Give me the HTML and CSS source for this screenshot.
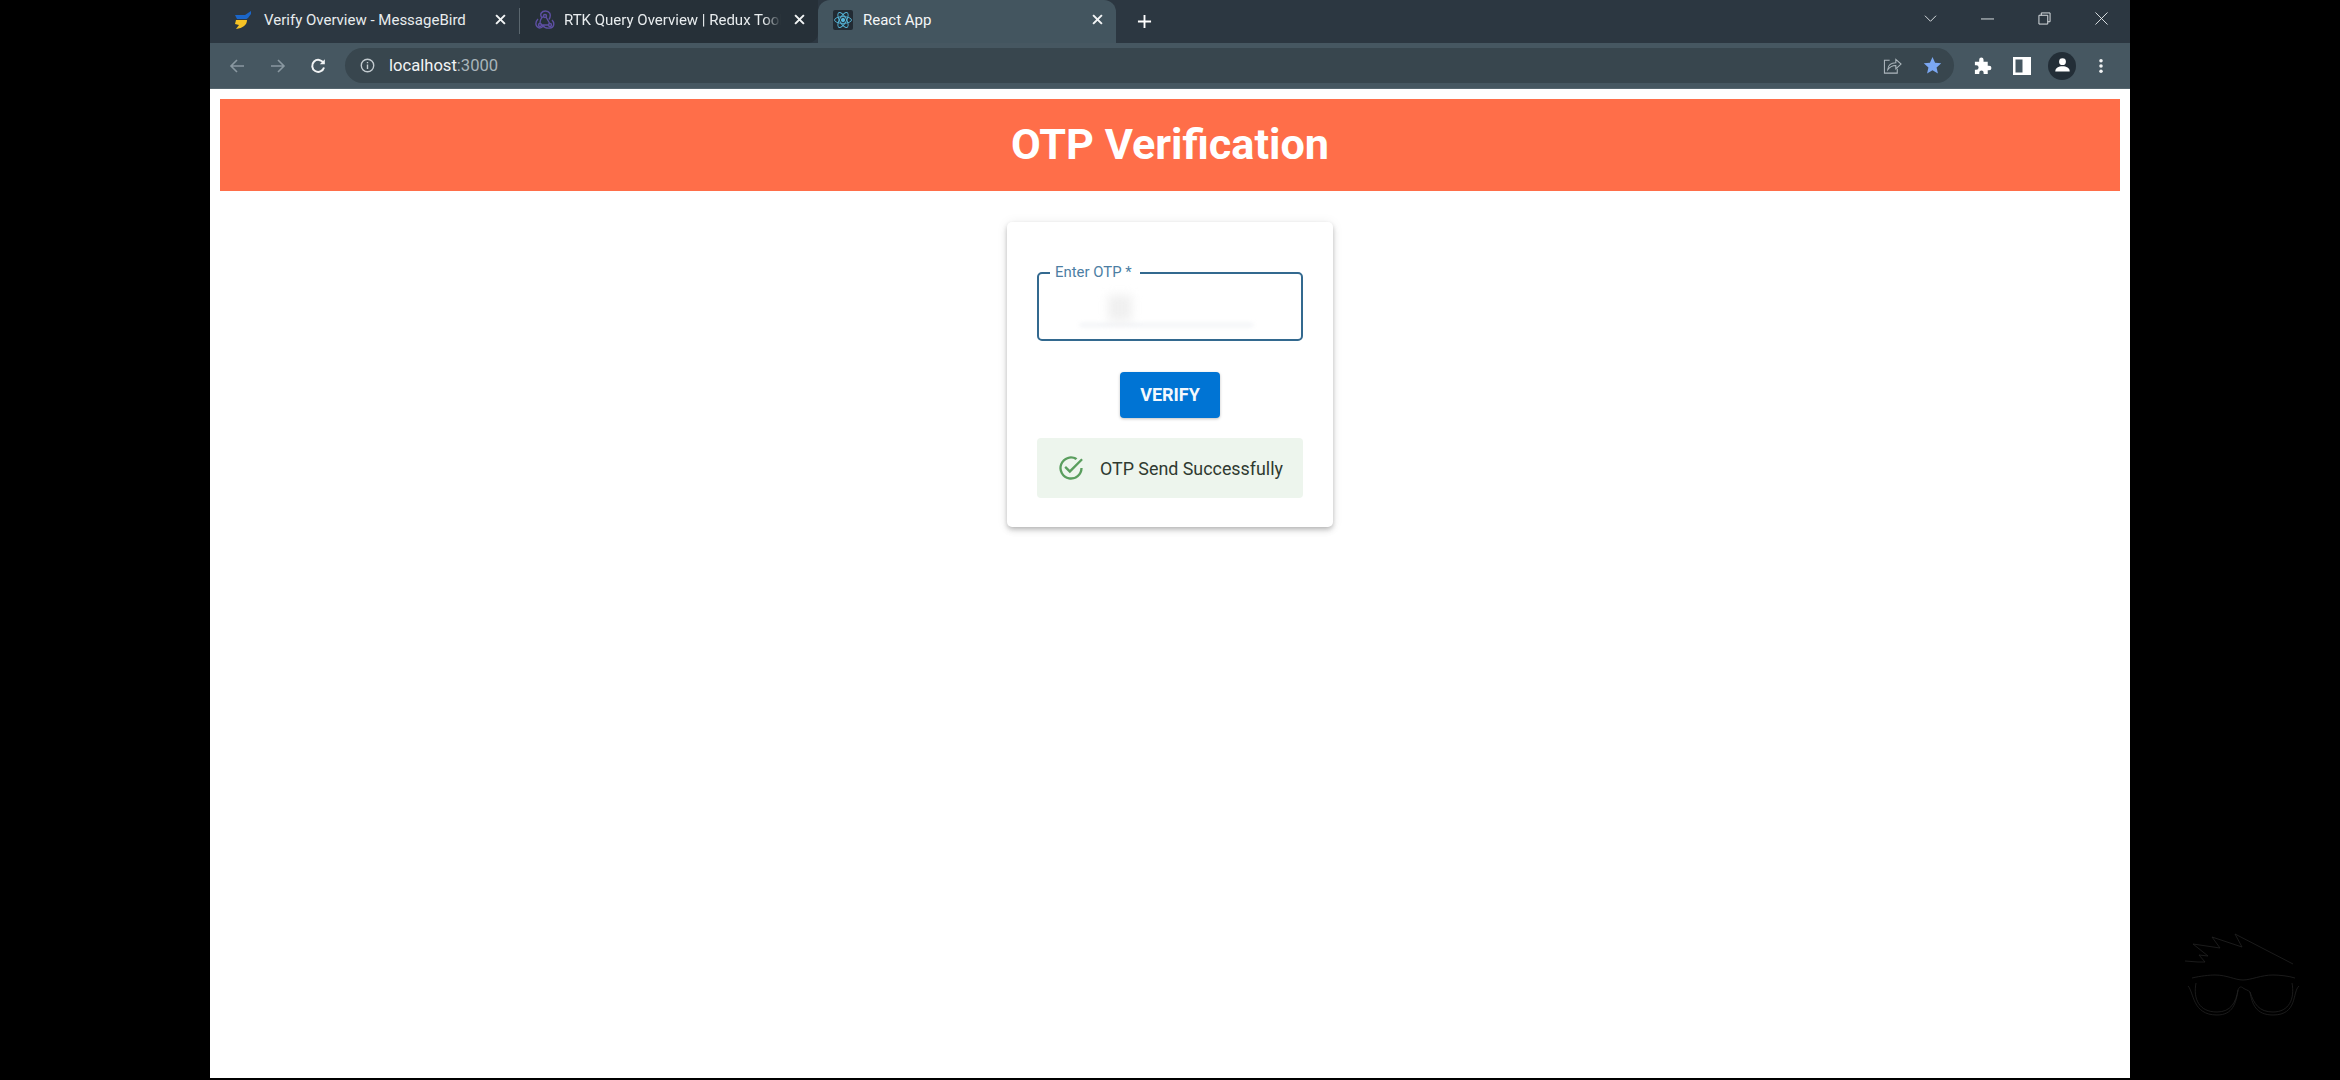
FILE: index.html
```html
<!DOCTYPE html>
<html lang="en">
<head>
<meta charset="utf-8">
<title>React App</title>
<link rel="stylesheet" href="styles.css">
</head>
<body>
<div class="window">
  <div class="tabstrip">
    <div class="tab tab-first">
      <svg class="favicon" viewBox="0 0 20 20"><path d="M2 5h10l6-4v3l-3 4c-1 1-2 1-3 1H4z" fill="#1b66c9"/><path d="M3 10h11c0 5-4 8-11 9l3-4-4-1z" fill="#f7c325"/></svg>
      <span class="tab-title">Verify Overview - MessageBird</span>
      <svg class="tab-close" viewBox="0 0 10 10"><path d="M1 1l8 8M9 1l-8 8"/></svg>
    </div>
    <div class="tab-sep"></div>
    <div class="tab tab-second">
      <svg class="favicon" viewBox="0 0 20 20" fill="none" stroke="#5d4fa3" stroke-width="1.400"><circle cx="10" cy="6" r="1.500"/><circle cx="5" cy="15" r="1.500"/><circle cx="15" cy="15" r="1.500"/><path d="M7 8C4 4 7 1 10.500 1S17 4 14 9.500M11 7l4 7M17 10c3 3 2 8-2 8-3 .5-6-.5-8-3h6M3 9c-3 3-3 8 1.500 9 2 0 3-1 3.500-2M5 13.500C5 10 6 8 8.500 6.500"/></svg>
      <span class="tab-title tab-fade">RTK Query Overview | Redux Tool</span>
      <svg class="tab-close" viewBox="0 0 10 10"><path d="M1 1l8 8M9 1l-8 8"/></svg>
    </div>
    <div class="tab tab-active">
      <svg class="favicon favicon-react" viewBox="0 0 20 20" fill="none" stroke="#56b6d8" stroke-width=".9"><rect width="20" height="20" rx="2" fill="#222b33" stroke="none"/><ellipse cx="10" cy="10" rx="8.500" ry="3.400"/><ellipse cx="10" cy="10" rx="8.500" ry="3.400" transform="rotate(60 10 10)"/><ellipse cx="10" cy="10" rx="8.500" ry="3.400" transform="rotate(120 10 10)"/><circle cx="10" cy="10" r="1.700" fill="#56b6d8"/></svg>
      <span class="tab-title">React App</span>
      <svg class="tab-close" viewBox="0 0 10 10"><path d="M1 1l8 8M9 1l-8 8"/></svg>
    </div>
    <svg class="newtab" viewBox="0 0 16 16"><path d="M8 1v14M1 8h14"/></svg>
    <div class="winctrls">
      <svg class="winicon" viewBox="0 0 14 14"><path d="M1 4l6 6 6-6"/></svg>
      <svg class="winicon" viewBox="0 0 14 14"><path d="M0 7.500h14"/></svg>
      <svg class="winicon" viewBox="0 0 14 14"><path d="M1 3.500h9.500v9.500H1zM3.500 3.500V1H13v9.500h-2.500"/></svg>
      <svg class="winicon" viewBox="0 0 14 14"><path d="M.5.500l13 13M13.500.500l-13 13"/></svg>
    </div>
  </div>
  <div class="toolbar">
    <svg class="navicon nav-dim" viewBox="0 0 16 16"><path d="M15 8H2M8 2L2 8l6 6"/></svg>
    <svg class="navicon nav-dim nav-forward" viewBox="0 0 16 16"><path d="M1 8h13M8 2l6 6-6 6"/></svg>
    <svg class="navicon nav-reload" viewBox="0 0 16 16"><path d="M13.500 5A6 6 0 1 0 14 9.500"/><path class="solid" d="M14.800 1.200v5h-5z"/></svg>
    <div class="omnibox">
      <svg class="info" viewBox="0 0 14 14"><circle cx="7" cy="7" r="5.800"/><path d="M7 6v4.200M7 3.700v1.200"/></svg>
      <span class="url">localhost<span class="url-port">:3000</span></span>
      <svg class="share" viewBox="0 0 20 18"><path d="M7 3H1.500v13.500H15V12"/><path d="M5 13c0-5 4-7.500 8.500-7.500V2L19 7l-5.500 5V8.500C9.500 8.500 7 10 5 13z"/></svg>
      <svg class="star" viewBox="0 0 20 20"><path d="M10 1l2.700 6 6.500.7-4.900 4.300 1.400 6.400L10 15.100l-5.700 3.300 1.400-6.400L.8 7.700 7.300 7z"/></svg>
    </div>
    <svg class="tool puzzle" viewBox="0 0 20 20"><path d="M2 6h4.500V4a2.300 2.300 0 0 1 4.600 0v2H15.500v4.300h1.500a2.400 2.400 0 0 1 0 4.800h-1.500V19h-4.300v-1.500a2.300 2.300 0 0 0-4.600 0V19H2v-4.500h1.500a2.400 2.400 0 0 0 0-4.800H2z"/></svg>
    <svg class="tool panel" viewBox="0 0 18 18"><path fill-rule="evenodd" d="M0 0h18v18H0zM2.500 2.500v13h7v-13z"/></svg>
    <div class="avatar"><svg viewBox="0 0 20 20"><circle cx="10" cy="5.500" r="4"/><path d="M1.500 17c0-4 4-6 8.500-6s8.500 2 8.500 6z"/></svg></div>
    <svg class="kebab" viewBox="0 0 6 18"><circle cx="3" cy="3" r="2"/><circle cx="3" cy="9" r="2"/><circle cx="3" cy="15" r="2"/></svg>
  </div>
  <main class="page">
    <header class="banner"><h1>OTP Verification</h1></header>
    <section class="card">
      <div class="field">
        <label class="field-label">Enter OTP *</label>
        <div class="blur-value"></div>
      </div>
      <button class="verify">VERIFY</button>
      <div class="alert">
        <svg class="alert-icon" viewBox="0 0 24 24"><path d="M20 12a8 8 0 1 1-4-6.930l1.450-1.450A10 10 0 1 0 22 12z"/><path d="M7.700 10.300L6.300 11.700 11 16.400 22.200 5.200 20.800 3.800 11 13.600z"/></svg>
        <span class="alert-text">OTP Send Successfully</span>
      </div>
    </section>
  </main>
</div>
<svg class="mascot" viewBox="0 0 180 160" fill="none">
  <path class="mascot-line" d="M133 44L75 14l7 13-30-10 8 11-27-4 15 12-9-1 6 7-7 0-13-1"/>
  <path class="mascot-line" d="M32 58c8-2 18-3 23-3 12 0 20 5 28 5s18-5 30-5c6 0 16 1 22 3"/>
  <path class="mascot-line" d="M28 66c6 6 4 29 29 29 16 0 19-12 21-25 1-3 3-4 5-2 3 2 5 2 7 4 2 12 6 23 23 23 25 0 19-23 26-29"/>
  <path class="mascot-line" d="M36 63c-3 16 3 29 21 29 14 0 19-10 21-22M132 63c3 16-3 29-19 29-14 0-19-8-23-20"/>
</svg>
</body>
</html>
```
FILE: styles.css
```css
* { box-sizing: border-box; }
html, body { margin: 0; height: 100%; }
body {
  width: 2340px;
  height: 1080px;
  background: #000;
  overflow: hidden;
  display: flex;
  justify-content: center;
  font-family: Roboto, "Liberation Sans", sans-serif;
}
.window {
  width: 1920px;
  height: 1078px;
  background: #fff;
  display: flex;
  flex-direction: column;
}

/* tab strip */
.tabstrip {
  height: 43px;
  flex: none;
  background: #2c3741;
  display: flex;
  align-items: flex-start;
  padding-left: 18px;
  color: #fff;
}
.tab {
  height: 43px;
  padding-bottom: 4px;
  display: flex;
  align-items: center;
  flex: none;
  font-size: 15px;
  color: #e8ecee;
}
.tab-first { width: 291px; padding-left: 5px; }
.tab-second {
  width: 298px;
  padding-left: 15px;
  background: #263038;
  border-radius: 0 0 10px 0;
}
.tab-sep { width: 1px; height: 26px; margin-top: 8px; background: #5a666e; flex: none; }
.tab-active {
  width: 298px;
  padding-left: 15px;
  background: #43555f;
  border-radius: 12px 12px 0 0;
  color: #f5f7f8;
}
.favicon { width: 20px; height: 20px; flex: none; margin-right: 11px; }
.tab-second .favicon { margin-right: 9px; }
.favicon-react { margin-right: 10px; }
.tab-title { flex: 1; white-space: nowrap; min-width: 0; }
.tab-fade {
  -webkit-mask-image: linear-gradient(90deg, #000 92%, transparent);
  mask-image: linear-gradient(90deg, #000 92%, transparent);
}
.tab-close {
  width: 11px;
  height: 11px;
  flex: none;
  margin: 0 13px;
  fill: none;
  stroke: #f3f5f6;
  stroke-width: 1.800;
}
.newtab {
  width: 15px;
  height: 15px;
  margin: 14px 0 0 21px;
  flex: none;
  fill: none;
  stroke: #fff;
  stroke-width: 2;
}
.winctrls {
  margin-left: auto;
  display: flex;
  align-items: center;
  gap: 44px;
  height: 36px;
  padding-right: 22px;
}
.winicon { width: 13px; height: 13px; fill: none; stroke: #e4e8ea; stroke-width: 1; }

/* toolbar */
.toolbar {
  height: 46px;
  flex: none;
  display: flex;
  align-items: center;
  padding: 0 0 0 19px;
  background: #465761;
  border-bottom: 1px solid #56666f;
}
.navicon { width: 16px; height: 16px; flex: none; fill: none; stroke-width: 1.600; }
.nav-forward { margin-left: 25px; }
.nav-reload { margin-left: 24px; }
.nav-dim { stroke: #8a98a1; }
.nav-reload { stroke: #f2f4f5; stroke-width: 2; }
.nav-reload .solid { fill: #f2f4f5; stroke: none; }
.omnibox {
  width: 1609px;
  height: 35px;
  margin-left: 19px;
  padding: 0 12px 0 15px;
  flex: none;
  border-radius: 18px;
  background: #38464e;
  display: flex;
  align-items: center;
  font-size: 16.600px;
}
.info { width: 15px; height: 15px; fill: none; stroke: #c3cbd0; stroke-width: 1.300; flex: none; }
.url { margin-left: 14px; color: #f2f4f5; }
.url-port { color: #a9b4ba; }
.share { width: 19px; height: 18px; margin-left: auto; fill: none; stroke: #aeb8be; stroke-width: 1.100; }
.star { width: 19px; height: 19px; margin-left: 21px; fill: #7ba7f2; }
.tool { flex: none; fill: #fff; }
.puzzle { width: 19px; height: 19px; margin-left: 19px; }
.panel { width: 18px; height: 18px; margin-left: 21px; }
.avatar {
  width: 28px;
  height: 28px;
  margin-left: 17px;
  flex: none;
  border-radius: 50%;
  background: #232e37;
  display: flex;
  align-items: center;
  justify-content: center;
}
.avatar svg { width: 17px; height: 17px; fill: #fff; }
.kebab { width: 6px; height: 16px; margin-left: 22px; flex: none; fill: #f2f4f5; }

/* page */
.page {
  flex: 1;
  display: flex;
  flex-direction: column;
  align-items: center;
  padding: 10px 10px 0;
  background: #fff;
}
.banner {
  width: 100%;
  height: 92px;
  background: #ff6e49;
  display: flex;
  align-items: center;
  justify-content: center;
}
.banner h1 {
  margin: 0;
  font-size: 43.200px;
  font-weight: 700;
  color: #fff;
  line-height: 1;
}
.card {
  width: 326px;
  height: 305px;
  margin-top: 31px;
  padding: 50px 30px 0;
  border-radius: 5px;
  background: #fff;
  box-shadow: 0 2px 5px -1px rgba(0,0,0,.22), 0 4px 6px rgba(0,0,0,.1), 0 1px 12px rgba(0,0,0,.08);
  display: flex;
  flex-direction: column;
  align-items: center;
}
.field {
  position: relative;
  width: 100%;
  height: 69px;
  border: 2px solid #33698f;
  border-radius: 5px;
  flex: none;
}
.field-label {
  position: absolute;
  top: -11px;
  left: 11px;
  padding: 0 8px 0 5px;
  background: #fff;
  color: #4c7ea3;
  font-size: 14.900px;
  line-height: 19px;
}
.blur-value {
  position: absolute;
  left: 41px;
  right: 48px;
  bottom: 12px;
  height: 4px;
  background: #f1f3f6;
  filter: blur(2px);
}
.blur-value::before {
  content: "";
  position: absolute;
  left: 28px;
  bottom: 6px;
  width: 24px;
  height: 26px;
  background: #f0f0f0;
  filter: blur(4px);
}
.verify {
  width: 100px;
  height: 46px;
  margin-top: 31px;
  padding: 0 0 2px;
  flex: none;
  border: 0;
  border-radius: 4px;
  background: #0074d4;
  box-shadow: 0 1px 3px rgba(0,0,0,.25);
  color: #f3f8fd;
  font: 700 18px Roboto, sans-serif;
}
.alert {
  width: 100%;
  height: 60px;
  margin-top: 20px;
  flex: none;
  padding-left: 20px;
  border-radius: 4px;
  background: #edf5ed;
  display: flex;
  align-items: center;
  color: #2f3a30;
  font-size: 17.850px;
}
.alert-icon { width: 28px; height: 28px; flex: none; fill: #5a9e5e; margin-right: 15px; }
.alert-text { white-space: nowrap; }

.mascot {
  position: absolute;
  left: 2160px;
  top: 920px;
  width: 180px;
  height: 160px;
}
.mascot-line { stroke: #222; stroke-width: .8; }
```
